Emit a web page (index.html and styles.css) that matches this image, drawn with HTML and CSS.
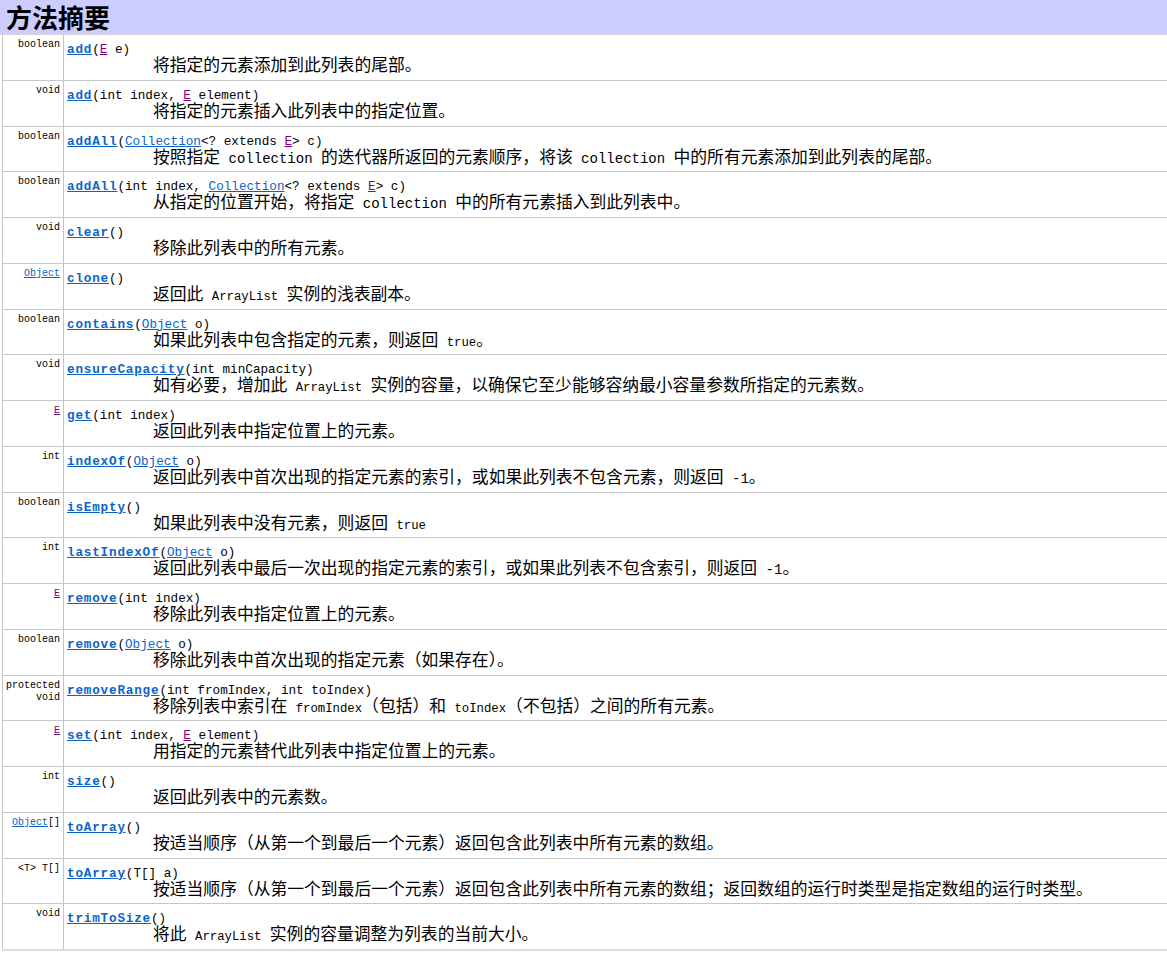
FILE: index.html
```html
<!DOCTYPE html>
<html lang="zh">
<head>
<meta charset="utf-8">
<title>方法摘要</title>
<link rel="stylesheet" href="styles.css">
</head>
<body>
<div class="hdr">方法摘要</div>
<table class="sum">
<tbody>
<tr><td class="t">boolean</td><td class="m"><div class="sig"><a class="nm">add</a>(<a class="tp">E</a> e)</div><div class="desc">将指定的元素添加到此列表的尾部。</div></td></tr>
<tr><td class="t">void</td><td class="m"><div class="sig"><a class="nm">add</a>(int index, <a class="tp">E</a> element)</div><div class="desc">将指定的元素插入此列表中的指定位置。</div></td></tr>
<tr><td class="t">boolean</td><td class="m"><div class="sig"><a class="nm">addAll</a>(<a class="lk">Collection</a>&lt;? extends <a class="tp">E</a>&gt; c)</div><div class="desc">按照指定<span class="w"> collection </span>的迭代器所返回的元素顺序，将该<span class="w"> collection </span>中的所有元素添加到此列表的尾部。</div></td></tr>
<tr><td class="t">boolean</td><td class="m"><div class="sig"><a class="nm">addAll</a>(int index, <a class="lk">Collection</a>&lt;? extends <a class="tp">E</a>&gt; c)</div><div class="desc">从指定的位置开始，将指定<span class="w"> collection </span>中的所有元素插入到此列表中。</div></td></tr>
<tr><td class="t">void</td><td class="m"><div class="sig"><a class="nm">clear</a>()</div><div class="desc">移除此列表中的所有元素。</div></td></tr>
<tr><td class="t"><a class="lk">Object</a></td><td class="m"><div class="sig"><a class="nm">clone</a>()</div><div class="desc">返回此<span class="w"> </span><code class="c">ArrayList</code><span class="w"> </span>实例的浅表副本。</div></td></tr>
<tr><td class="t">boolean</td><td class="m"><div class="sig"><a class="nm">contains</a>(<a class="lk">Object</a> o)</div><div class="desc">如果此列表中包含指定的元素，则返回<span class="w"> </span><code class="c">true</code>。</div></td></tr>
<tr><td class="t">void</td><td class="m"><div class="sig"><a class="nm">ensureCapacity</a>(int minCapacity)</div><div class="desc">如有必要，增加此<span class="w"> </span><code class="c">ArrayList</code><span class="w"> </span>实例的容量，以确保它至少能够容纳最小容量参数所指定的元素数。</div></td></tr>
<tr><td class="t"><a class="tp">E</a></td><td class="m"><div class="sig"><a class="nm">get</a>(int index)</div><div class="desc">返回此列表中指定位置上的元素。</div></td></tr>
<tr><td class="t">int</td><td class="m"><div class="sig"><a class="nm">indexOf</a>(<a class="lk">Object</a> o)</div><div class="desc">返回此列表中首次出现的指定元素的索引，或如果此列表不包含元素，则返回<span class="w"> -1</span>。</div></td></tr>
<tr><td class="t">boolean</td><td class="m"><div class="sig"><a class="nm">isEmpty</a>()</div><div class="desc">如果此列表中没有元素，则返回<span class="w"> </span><code class="c">true</code></div></td></tr>
<tr><td class="t">int</td><td class="m"><div class="sig"><a class="nm">lastIndexOf</a>(<a class="lk">Object</a> o)</div><div class="desc">返回此列表中最后一次出现的指定元素的索引，或如果此列表不包含索引，则返回<span class="w"> -1</span>。</div></td></tr>
<tr><td class="t"><a class="tp">E</a></td><td class="m"><div class="sig"><a class="nm">remove</a>(int index)</div><div class="desc">移除此列表中指定位置上的元素。</div></td></tr>
<tr><td class="t">boolean</td><td class="m"><div class="sig"><a class="nm">remove</a>(<a class="lk">Object</a> o)</div><div class="desc">移除此列表中首次出现的指定元素（如果存在）。</div></td></tr>
<tr><td class="t">protected<br>void</td><td class="m"><div class="sig"><a class="nm">removeRange</a>(int fromIndex, int toIndex)</div><div class="desc">移除列表中索引在<span class="w"> </span><code class="c">fromIndex</code>（包括）和<span class="w"> </span><code class="c">toIndex</code>（不包括）之间的所有元素。</div></td></tr>
<tr><td class="t"><a class="tp">E</a></td><td class="m"><div class="sig"><a class="nm">set</a>(int index, <a class="tp">E</a> element)</div><div class="desc">用指定的元素替代此列表中指定位置上的元素。</div></td></tr>
<tr><td class="t">int</td><td class="m"><div class="sig"><a class="nm">size</a>()</div><div class="desc">返回此列表中的元素数。</div></td></tr>
<tr><td class="t"><a class="lk">Object</a>[]</td><td class="m"><div class="sig"><a class="nm">toArray</a>()</div><div class="desc">按适当顺序（从第一个到最后一个元素）返回包含此列表中所有元素的数组。</div></td></tr>
<tr><td class="t">&lt;T&gt; T[]</td><td class="m"><div class="sig"><a class="nm">toArray</a>(T[] a)</div><div class="desc">按适当顺序（从第一个到最后一个元素）返回包含此列表中所有元素的数组；返回数组的运行时类型是指定数组的运行时类型。</div></td></tr>
<tr><td class="t">void</td><td class="m"><div class="sig"><a class="nm">trimToSize</a>()</div><div class="desc">将此<span class="w"> </span><code class="c">ArrayList</code><span class="w"> </span>实例的容量调整为列表的当前大小。</div></td></tr>
</tbody>
</table>
</body>
</html>
```
FILE: styles.css
```css
html, body {
  margin: 0;
  padding: 0;
  background: #ffffff;
  color: #000000;
  font-family: "Noto Sans CJK SC", sans-serif;
}

.hdr {
  height: 33px;
  line-height: 33px;
  padding-left: 6px;
  background: #ccccff;
  border-bottom: 2px solid #d4d4d4;
  font-size: 26px;
  font-weight: bold;
  color: #000000;
}

.sum {
  margin-left: 2px;
  width: calc(100% - 2px);
  border-collapse: collapse;
  border-bottom: 2px solid #dcdcdc;
}

.sum td {
  padding: 3px 3px 3px 3px;
  vertical-align: top;
  border-bottom: 1px solid #c8c8c8;
}

.t {
  width: 54px;
  border-left: 1px solid #c4c4c4;
  border-right: 1px solid #c4c4c4;
  text-align: right;
  font-family: "Liberation Mono", monospace;
  font-size: 10px;
  line-height: 12px;
  padding-top: 4px !important;
  white-space: nowrap;
}

.m {
  padding-left: 3px;
}

.sig {
  height: 15px;
  line-height: 15px;
  padding-top: 4px;
  font-family: "Liberation Mono", monospace;
  font-size: 12.67px;
  white-space: nowrap;
}

.nm {
  font-weight: bold;
  letter-spacing: 0.8px;
  color: #0a64c8;
  text-decoration: underline;
}

.lk {
  color: #0a64c8;
  text-decoration: underline;
}

.tp {
  color: #800080;
  text-decoration: underline;
}

.desc {
  height: 19.75px;
  line-height: 18px;
  padding-left: 86px;
  font-family: "Liberation Sans", "Noto Sans CJK SC", sans-serif;
  font-size: 16.8px;
  white-space: nowrap;
}

.w {
  font-family: "Liberation Mono", monospace;
  font-size: 14px;
  white-space: pre;
}

.c {
  font-family: "Liberation Mono", monospace;
  font-size: 12.3px;
}
```
